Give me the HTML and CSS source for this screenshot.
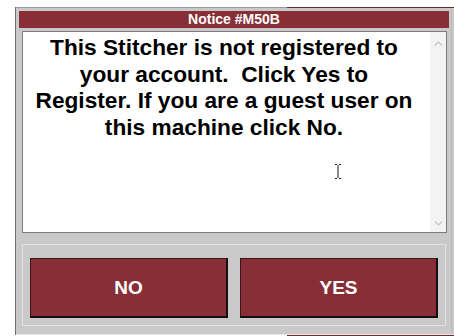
FILE: index.html
```html
<!DOCTYPE html>
<html>
<head>
<meta charset="utf-8">
<link rel="stylesheet" href="styles.css">
</head>
<body>
<div class="window">
  <div class="titlebar">Notice #M50B</div>
  <div class="message">
    <div class="msg-text">This Stitcher is not registered to<br>your account.&nbsp; Click Yes to<br>Register. If you are a guest user on<br>this machine click No.</div>
    <div class="scrollbar">
      <svg class="chev" width="9" height="5" viewBox="0 0 9 5"><path d="M1 4.5 L4.5 1 L8 4.5" fill="none" stroke="#c4c4c4" stroke-width="1.2"/></svg>
      <svg class="chev" width="9" height="5" viewBox="0 0 9 5"><path d="M1 0.5 L4.5 4 L8 0.5" fill="none" stroke="#c4c4c4" stroke-width="1.2"/></svg>
    </div>
  </div>
  <div class="actions">
    <button class="btn">NO</button>
    <button class="btn">YES</button>
  </div>
</div>
<svg class="ibeam" width="8" height="15" viewBox="0 0 8 15"><path d="M1 0.5 H3 M5 0.5 H7 M4 1 V14 M1 14.5 H3 M5 14.5 H7" fill="none" stroke="#222" stroke-width="1"/><path d="M4 1 V14" stroke="#888" stroke-width="1.4"/></svg>
</body>
</html>
```
FILE: styles.css
```css
html {
  background:
    linear-gradient(#6d2a31, #6d2a31) no-repeat 287px 335px / 167px 1px,
    #ffffff;
}
body {
  margin: 0;
  width: 454px;
  height: 336px;
  overflow: hidden;
  position: relative;
  font-family: "Liberation Sans", Arial, sans-serif;
}
.window {
  margin: 7px 0 0 15px;
  width: 439px;
  height: 328px;
  box-sizing: border-box;
  border-left: 1px solid #6f6f6f;
  background:
    linear-gradient(to right, #9a9a9a 271px, #6d2a31 271px) top / 100% 1px no-repeat,
    linear-gradient(#e6e6e6, #e6e6e6) bottom / 100% 1px no-repeat,
    linear-gradient(#b9b9b9, #b9b9b9) 435px 0 / 1px 100% no-repeat,
    #c9c9c9;
  padding: 4px 0 0 3px;
  display: flex;
  flex-direction: column;
}
.titlebar {
  width: 430px;
  height: 17px;
  background: #882e37;
  color: #ffffff;
  font-weight: bold;
  font-size: 14px;
  line-height: 17px;
  text-align: center;
}
.message {
  margin: 3px 0 0 3px;
  width: 425px;
  height: 202px;
  box-sizing: border-box;
  border: 1px solid #7a7a7a;
  background: #ffffff;
  display: flex;
}
.msg-text {
  flex: 1;
  padding: 2px 5px 0 0;
  font-weight: bold;
  font-size: 22.7px;
  line-height: 26.5px;
  text-align: center;
  color: #000000;
}
.scrollbar {
  width: 16px;
  background: #f3f3f3;
  display: flex;
  flex-direction: column;
  justify-content: space-between;
  align-items: center;
  padding: 9px 0 6px;
  box-sizing: border-box;
}
.chev {
  display: block;
}
.actions {
  margin: 11px 0 0 3px;
  width: 424px;
  height: 82px;
  box-sizing: border-box;
  border: 1px solid #e2e2e2;
  padding: 13px 7px 7px;
  display: flex;
  gap: 12px;
}
.btn {
  flex: 1;
  height: 60px;
  box-sizing: border-box;
  background: #882e37;
  color: #ffffff;
  font-family: "Liberation Sans", Arial, sans-serif;
  font-weight: bold;
  font-size: 19px;
  border-style: solid;
  border-width: 1px 2px 2px 1px;
  border-color: #3b1417 #111111 #111111 #3b1417;
  padding: 0;
}
.ibeam {
  position: absolute;
  left: 334px;
  top: 164px;
}
```
